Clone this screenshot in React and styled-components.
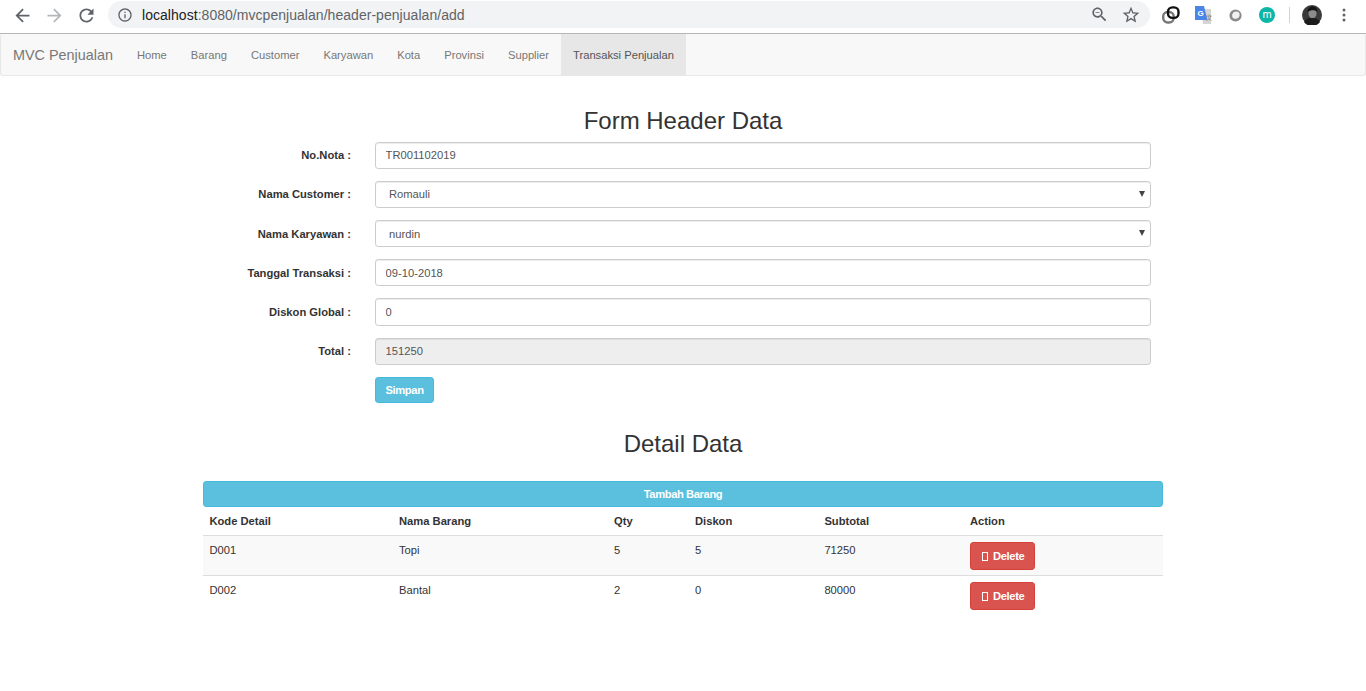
import React from "react";
import styled, { createGlobalStyle } from "styled-components";

const Global = createGlobalStyle`
  html, body { margin: 0; padding: 0; background: #fff; }
  body { font-family: "Liberation Sans", Arial, sans-serif; font-size: 11.2px; line-height: 16px; color: #333; }
  * { box-sizing: border-box; }
`;

const ChromeBar = styled.div`
  display: flex; align-items: center; height: 34px; padding: 0 6px 3px; background: #fff;
  border-bottom: 1px solid #b6b6b6;
`;
const ToolIcon = styled.span`
  width: 32px; height: 29px; flex: none; display: flex; align-items: center; justify-content: center;
  color: ${p => p.$color || "#5f6368"};
`;
const UrlPill = styled.div`
  flex: none; width: 1042px; height: 27px; margin-left: 6px; margin-top: 1px; align-self: flex-start; padding: 0 3px 0 1px;
  display: flex; align-items: center; background: #f1f3f4; border-radius: 14px;
`;
const PillIcon = styled.span`
  width: 32px; height: 24px; flex: none; display: flex; align-items: center; justify-content: center; color: #5f6368;
`;
const UrlText = styled.div`
  flex: 1; font-size: 14px; letter-spacing: .04px; color: #5f6368; margin-left: 1px;
  b { font-weight: 400; color: #202124; }
`;
const Extensions = styled.div`
  display: flex; align-items: center; margin-left: 5px;
`;
const Divider = styled.span`
  width: 1px; height: 16px; margin: 0 6px; background: #d0d2d4;
`;
const MBadge = styled.span`
  width: 16px; height: 16px; border-radius: 50%; background: #0db5a8; color: #fff; font-size: 11px; line-height: 15px; text-align: center;
`;

const Navbar = styled.nav`
  display: flex; height: 42px; background: #f8f8f8; border: 1px solid #e7e7e7; border-top: 0;
  border-radius: 3px;
`;
const Brand = styled.a`
  display: flex; align-items: center; font-size: 14.4px; color: #777; padding: 1px 12px 0;
`;
const NavLink = styled.a`
  display: flex; align-items: center; font-size: 11.2px; padding: 1px 12px 0;
  color: ${p => (p.$active ? "#555" : "#777")};
  background: ${p => (p.$active ? "#e7e7e7" : "transparent")};
`;

const Container = styled.main`
  width: 960px; margin: 0 auto; padding-top: 16px;
`;
const Title = styled.h3`
  margin: ${p => p.$top || "16px"} 0 7.3px; font-size: 24px; font-weight: 500; line-height: 26.4px; text-align: center; color: #333;
`;
const FormRow = styled.div`
  display: grid; grid-template-columns: 148px 776px; column-gap: 24px; margin-bottom: 12px; min-height: 27.2px;
`;
const Label = styled.label`
  text-align: right; font-weight: 700; padding-top: 5.6px; color: #333;
`;
const Field = styled.input`
  display: block; width: 100%; height: 27.2px; padding: 0 9.6px; font: inherit; color: #555;
  border: 1px solid #ccc; border-radius: 3.2px; outline: 0;
  background: ${p => (p.disabled ? "#eee" : "#fff")};
  box-shadow: inset 0 1px 1px rgba(0,0,0,.075);
`;
const SelectWrap = styled.div`
  position: relative;
`;
const Select = styled.select`
  display: block; width: 100%; height: 27.2px; padding: 0 9.6px 0 13px; font: inherit; color: #555;
  border: 1px solid #ccc; border-radius: 3.2px; background: #fff; appearance: none; outline: 0;
  box-shadow: inset 0 1px 1px rgba(0,0,0,.075);
`;
const Caret = styled.span`
  position: absolute; right: 6px; top: 10px; width: 0; height: 0; pointer-events: none;
  border-left: 3px solid transparent; border-right: 3px solid transparent; border-top: 6px solid #444;
`;
const Btn = styled.button`
  display: inline-block; height: 26.4px; padding: 0 9.4px;
  font: inherit; font-weight: 700; letter-spacing: -.35px; color: #fff; border-radius: 3.2px; cursor: pointer;
  background: #5bc0de; border: 1px solid #46b8da;
`;
const AddBar = styled(Btn)`
  display: block; width: 100%; height: 26px; margin-top: 23.3px; letter-spacing: -.4px;
`;
const DeleteBtn = styled(Btn)`
  display: block; width: 65px; height: 27.2px; padding: 0 0 0 11px; text-align: left;
  background: #d9534f; border-color: #d43f3a;
`;
const Tofu = styled.span`
  display: inline-block; width: 6px; height: 9px; border: 1px solid #fff; margin-right: 5px; vertical-align: -1px;
`;
const Table = styled.table`
  width: 960px; border-collapse: collapse; table-layout: fixed;
`;
const Th = styled.th`
  padding: 6.4px 6.4px 5.7px; text-align: left; font-weight: 700; border-bottom: 1px solid #ddd; line-height: 16px;
`;
const Td = styled.td`
  padding: 6.4px 6.4px 5.4px; vertical-align: top; line-height: 16px; border-top: 1px solid #ddd;
`;
const Row = styled.tr`
  background: ${p => (p.$striped ? "#f9f9f9" : "#fff")};
`;

const P = ({ d, s = 24 }) => (
  <svg width={s} height={s} viewBox="0 0 24 24" fill="currentColor"><path d={d} /></svg>
);
const back = "M20 11H7.83l5.59-5.59L12 4l-8 8 8 8 1.41-1.41L7.83 13H20v-2z";
const forward = "M12 4l-1.41 1.41L16.17 11H4v2h12.17l-5.58 5.59L12 20l8-8z";
const reload = "M17.65 6.35C16.2 4.9 14.21 4 12 4c-4.42 0-7.99 3.58-7.99 8s3.57 8 7.99 8c3.73 0 6.84-2.55 7.73-6h-2.08c-.82 2.33-3.04 4-5.65 4-3.31 0-6-2.69-6-6s2.69-6 6-6c1.66 0 3.14.69 4.22 1.78L13 11h7V4l-2.35 2.35z";
const info = "M11 7h2v2h-2zm0 4h2v6h-2zm1-9C6.48 2 2 6.48 2 12s4.48 10 10 10 10-4.48 10-10S17.52 2 12 2zm0 18c-4.41 0-8-3.59-8-8s3.59-8 8-8 8 3.59 8 8-3.59 8-8 8z";
const zoomOut = "M15.5 14h-.79l-.28-.27C15.41 12.59 16 11.11 16 9.5 16 5.91 13.09 3 9.5 3S3 5.91 3 9.5 5.91 16 9.5 16c1.61 0 3.09-.59 4.23-1.57l.27.28v.79l5 4.99L20.49 19l-4.99-5zm-6 0C7.01 14 5 11.99 5 9.5S7.01 5 9.5 5 14 7.01 14 9.5 11.99 14 9.5 14zM7 9h5v1H7z";
const star = "M22 9.24l-7.19-.62L12 2 9.19 8.63 2 9.24l5.46 4.73L5.82 21 12 17.27 18.18 21l-1.63-7.03L22 9.24zM12 15.4l-3.76 2.27 1-4.28-3.32-2.88 4.38-.38L12 6.1l1.71 4.04 4.38.38-3.32 2.88 1 4.28L12 15.4z";

const LinkExt = () => (
  <svg width="18" height="18" viewBox="0 0 18 18" fill="none" strokeWidth="2.4">
    <rect x="1.2" y="6" width="10.5" height="10.5" rx="4.5" stroke="#777" />
    <rect x="6" y="1.4" width="10.5" height="10.5" rx="4.5" stroke="#111" />
  </svg>
);
const TranslateExt = () => (
  <svg width="18" height="18" viewBox="0 0 18 18">
    <path d="M7 3h10v15H9z" fill="#d5d5d5" />
    <path d="M1 0h9l3.5 14H1z" fill="#4a86e8" />
    <text x="3.4" y="10" fontSize="8" fontWeight="700" fontFamily="Liberation Sans" fill="#fff">G</text>
    <text x="11.5" y="14" fontSize="7" fontFamily="Liberation Sans" fill="#777">文</text>
  </svg>
);
const RingExt = () => (
  <svg width="15" height="15" viewBox="0 0 16 16" fill="none">
    <circle cx="8" cy="8" r="5" stroke="#8a8a8a" strokeWidth="3" />
    <circle cx="8.8" cy="7.2" r="3.6" fill="#f0f0f0" />
  </svg>
);
const Avatar = () => (
  <svg width="20" height="20" viewBox="0 0 20 20">
    <circle cx="10" cy="10" r="10" fill="#3a3a3a" />
    <ellipse cx="10.5" cy="8.5" rx="4" ry="5" fill="#8c8c8c" />
    <path d="M5.5 7c0-4 2.5-5.5 5-5.5s5 1.5 5 5.5c-2-2.5-7-2.5-10 0z" fill="#161616" />
    <path d="M2 17c2-3.5 5-4 8-4s6 .5 8 4a10 10 0 0 1-16 0z" fill="#1c1c1c" />
  </svg>
);
const Dots = () => (
  <svg width="16" height="16" viewBox="0 0 16 16" fill="#5f6368">
    <circle cx="8" cy="3" r="1.5" /><circle cx="8" cy="8" r="1.5" /><circle cx="8" cy="13" r="1.5" />
  </svg>
);

const navItems = ["Home", "Barang", "Customer", "Karyawan", "Kota", "Provinsi", "Supplier"];
const rows = [
  ["D001", "Topi", "5", "5", "71250"],
  ["D002", "Bantal", "2", "0", "80000"],
];
const cols = [189.6, 215, 81, 129.4, 145.6, 199.4];

export default function App() {
  return (
    <>
      <Global />
      <ChromeBar>
        <ToolIcon><P d={back} s={21} /></ToolIcon>
        <ToolIcon $color="#b4b7ba"><P d={forward} s={21} /></ToolIcon>
        <ToolIcon><P d={reload} s={21} /></ToolIcon>
        <UrlPill>
          <PillIcon><P d={info} s={16} /></PillIcon>
          <UrlText><b>localhost</b>:8080/mvcpenjualan/header-penjualan/add</UrlText>
          <PillIcon><P d={zoomOut} s={19} /></PillIcon>
          <PillIcon><P d={star} s={20} /></PillIcon>
        </UrlPill>
        <Extensions>
          <ToolIcon><LinkExt /></ToolIcon>
          <ToolIcon><TranslateExt /></ToolIcon>
          <ToolIcon><RingExt /></ToolIcon>
          <ToolIcon><MBadge>m</MBadge></ToolIcon>
          <Divider />
          <ToolIcon><Avatar /></ToolIcon>
          <ToolIcon><Dots /></ToolIcon>
        </Extensions>
      </ChromeBar>
      <Navbar>
        <Brand>MVC Penjualan</Brand>
        {navItems.map(n => <NavLink key={n}>{n}</NavLink>)}
        <NavLink $active>Transaksi Penjualan</NavLink>
      </Navbar>
      <Container>
        <Title>Form Header Data</Title>
        <FormRow>
          <Label>No.Nota :</Label>
          <Field defaultValue="TR001102019" />
        </FormRow>
        <FormRow>
          <Label>Nama Customer :</Label>
          <SelectWrap>
            <Select defaultValue="Romauli"><option>Romauli</option></Select>
            <Caret />
          </SelectWrap>
        </FormRow>
        <FormRow>
          <Label>Nama Karyawan :</Label>
          <SelectWrap>
            <Select defaultValue="nurdin"><option>nurdin</option></Select>
            <Caret />
          </SelectWrap>
        </FormRow>
        <FormRow>
          <Label>Tanggal Transaksi :</Label>
          <Field defaultValue="09-10-2018" />
        </FormRow>
        <FormRow>
          <Label>Diskon Global :</Label>
          <Field defaultValue="0" />
        </FormRow>
        <FormRow>
          <Label>Total :</Label>
          <Field defaultValue="151250" disabled />
        </FormRow>
        <FormRow>
          <span />
          <div><Btn type="button">Simpan</Btn></div>
        </FormRow>
        <Title $top="27.2px">Detail Data</Title>
        <AddBar type="button">Tambah Barang</AddBar>
        <Table>
          <colgroup>{cols.map((w, i) => <col key={i} width={w} />)}</colgroup>
          <thead>
            <tr>
              {["Kode Detail", "Nama Barang", "Qty", "Diskon", "Subtotal", "Action"].map(h => <Th key={h}>{h}</Th>)}
            </tr>
          </thead>
          <tbody>
            {rows.map((r, i) => (
              <Row key={r[0]} $striped={i === 0}>
                {r.map((c, j) => <Td key={j}>{c}</Td>)}
                <Td><DeleteBtn type="button"><Tofu />Delete</DeleteBtn></Td>
              </Row>
            ))}
          </tbody>
        </Table>
      </Container>
    </>
  );
}
